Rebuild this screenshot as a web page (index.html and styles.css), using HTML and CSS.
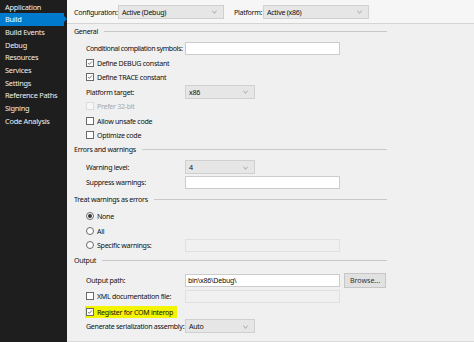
FILE: index.html
```html
<!DOCTYPE html>
<html lang="en">
<head>
    <meta charset="UTF-8">
    <title>Project Properties - Build</title>
    <link rel="stylesheet" href="styles.css">
</head>
<body>
    <div class="window">
        <nav class="sidebar">
            <div class="nav-item">Application</div>
            <div class="nav-item active">Build</div>
            <div class="nav-item">Build Events</div>
            <div class="nav-item">Debug</div>
            <div class="nav-item">Resources</div>
            <div class="nav-item">Services</div>
            <div class="nav-item">Settings</div>
            <div class="nav-item">Reference Paths</div>
            <div class="nav-item">Signing</div>
            <div class="nav-item">Code Analysis</div>
        </nav>

        <main class="main">
            <div class="topbar">
                <span class="top-label">Configuration:</span>
                <div class="select wide">Active (Debug)
                    <svg class="chev" viewBox="0 0 6 4"><polyline points="0.5,0.8 3,3.2 5.5,0.8"/></svg>
                </div>
                <span class="top-label platform">Platform:</span>
                <div class="select wide">Active (x86)
                    <svg class="chev" viewBox="0 0 6 4"><polyline points="0.5,0.8 3,3.2 5.5,0.8"/></svg>
                </div>
            </div>

            <div class="content">
                <!-- General -->
                <div class="section-head">General</div>
                <div class="group general">
                    <div class="row">
                        <span class="label tight">Conditional compilation symbols:</span>
                        <div class="textbox"></div>
                    </div>
                    <div class="row">
                        <span class="check checked"><svg viewBox="0 0 8 8"><polyline points="1.5,4.2 3.2,5.8 6.5,2"/></svg></span>
                        <span>Define DEBUG constant</span>
                    </div>
                    <div class="row">
                        <span class="check checked"><svg viewBox="0 0 8 8"><polyline points="1.5,4.2 3.2,5.8 6.5,2"/></svg></span>
                        <span>Define TRACE constant</span>
                    </div>
                    <div class="row">
                        <span class="label">Platform target:</span>
                        <div class="select">x86
                            <svg class="chev" viewBox="0 0 6 4"><polyline points="0.5,0.8 3,3.2 5.5,0.8"/></svg>
                        </div>
                    </div>
                    <div class="row disabled">
                        <span class="check"></span>
                        <span>Prefer 32-bit</span>
                    </div>
                    <div class="row">
                        <span class="check"></span>
                        <span>Allow unsafe code</span>
                    </div>
                    <div class="row">
                        <span class="check"></span>
                        <span>Optimize code</span>
                    </div>
                </div>

                <!-- Errors and warnings -->
                <div class="section-head">Errors and warnings</div>
                <div class="group errors">
                    <div class="row">
                        <span class="label">Warning level:</span>
                        <div class="select">4
                            <svg class="chev" viewBox="0 0 6 4"><polyline points="0.5,0.8 3,3.2 5.5,0.8"/></svg>
                        </div>
                    </div>
                    <div class="row">
                        <span class="label">Suppress warnings:</span>
                        <div class="textbox"></div>
                    </div>
                </div>

                <!-- Treat warnings as errors -->
                <div class="section-head">Treat warnings as errors</div>
                <div class="group treat">
                    <div class="row">
                        <span class="radio selected"></span>
                        <span>None</span>
                    </div>
                    <div class="row">
                        <span class="radio"></span>
                        <span>All</span>
                    </div>
                    <div class="row">
                        <span class="radio"></span>
                        <span class="label short">Specific warnings:</span>
                        <div class="textbox off"></div>
                    </div>
                </div>

                <!-- Output -->
                <div class="section-head">Output</div>
                <div class="group output">
                    <div class="row">
                        <span class="label">Output path:</span>
                        <div class="textbox">bin\x86\Debug\</div>
                        <button class="browse">Browse...</button>
                    </div>
                    <div class="row">
                        <span class="check"></span>
                        <span class="label short">XML documentation file:</span>
                        <div class="textbox off"></div>
                    </div>
                    <div class="row">
                        <span class="highlight">
                            <span class="check checked"><svg viewBox="0 0 8 8"><polyline points="1.5,4.2 3.2,5.8 6.5,2"/></svg></span>
                            <span>Register for COM interop</span>
                        </span>
                    </div>
                    <div class="row">
                        <span class="label">Generate serialization assembly:</span>
                        <div class="select">Auto
                            <svg class="chev" viewBox="0 0 6 4"><polyline points="0.5,0.8 3,3.2 5.5,0.8"/></svg>
                        </div>
                    </div>
                </div>
            </div>
        </main>
    </div>
</body>
</html>
```

FILE: styles.css
```css
:root {
    --sidebar-bg: #1e1e1e;
    --accent: #007acc;
    --panel-bg: #f0f0f0;
    --text-color: #111111;
    --muted: #a8a8a8;
    --border: #cccccc;
}

* {
    box-sizing: border-box;
}

body {
    margin: 0;
    font-family: 'Noto Sans', 'Open Sans', sans-serif;
    font-size: 7.1px;
    letter-spacing: -0.3px;
    color: var(--text-color);
    background: var(--panel-bg);
}

.window {
    display: flex;
    width: 474px;
    height: 342px;
    overflow: hidden;
}

/* left navigation */
.sidebar {
    width: 67px;
    flex-shrink: 0;
    background: var(--sidebar-bg);
    padding-top: 0.5px;
}

.nav-item {
    position: relative;
    height: 12.7px;
    line-height: 12.7px;
    padding-left: 5px;
    color: #f1f1f1;
    font-size: 7.4px;
    letter-spacing: -0.25px;
    white-space: nowrap;
}

.nav-item.active {
    background: var(--accent);
    color: #ffffff;
    margin-right: 3px;
}

.nav-item.active::after {
    content: "";
    position: absolute;
    right: -3px;
    top: 3.3px;
    border-top: 3px solid transparent;
    border-bottom: 3px solid transparent;
    border-left: 3px solid var(--accent);
}

/* right panel */
.main {
    flex: 1;
    background: var(--panel-bg);
    border-bottom: 1px solid #dadada;
}

.topbar {
    height: 24px;
    display: flex;
    align-items: center;
    padding-left: 7px;
    background: #f6f6f6;
    border-bottom: 1px solid #d4d4d4;
}

.top-label {
    width: 44px;
}

.top-label.platform {
    width: 29px;
    margin-left: 10px;
}

.content {
    padding-right: 87px;
}

.section-head {
    height: 14px;
    display: flex;
    align-items: center;
    gap: 6px;
    padding-left: 7px;
    white-space: nowrap;
}

.section-head::after {
    content: "";
    flex: 1;
    border-top: 1px solid #c9c9c9;
    margin-top: 1px;
}

.group {
    display: flex;
    flex-direction: column;
    padding-left: 19px;
}

.row {
    height: 14px;
    display: flex;
    align-items: center;
    white-space: nowrap;
}

.general {
    margin-top: 3px;
    gap: 0.5px;
}

.errors {
    margin-top: 4px;
    gap: 1px;
    margin-bottom: 3px;
}

.treat {
    margin-top: 3px;
    gap: 0.5px;
    margin-bottom: 1px;
}

.output {
    margin-top: 6px;
    gap: 2px;
}

.output .row:last-child {
    margin-top: -2px;
}

.label {
    width: 99px;
    flex-shrink: 0;
}

.label.tight {
    letter-spacing: -0.45px;
}

.label.short {
    width: 88px;
}

.disabled {
    color: var(--muted);
}

/* controls */
.check,
.radio {
    width: 8px;
    height: 8px;
    flex-shrink: 0;
    border: 1px solid #6a6a6a;
    background: #ffffff;
    margin-right: 3px;
    display: inline-flex;
}

.disabled .check {
    border-color: #dcdcdc;
    background: #f7f7f7;
}

.check svg {
    width: 100%;
    height: 100%;
    fill: none;
    stroke: #444444;
    stroke-width: 1;
}

.radio {
    border-radius: 50%;
    align-items: center;
    justify-content: center;
}

.radio.selected::after {
    content: "";
    width: 4px;
    height: 4px;
    border-radius: 50%;
    background: #333333;
}

.textbox {
    width: 155px;
    height: 13px;
    background: #ffffff;
    border: 1px solid var(--border);
    padding-left: 2px;
    line-height: 11px;
}

.textbox.off {
    background: var(--panel-bg);
    border-color: #e0e0e0;
}

.select {
    position: relative;
    width: 70px;
    height: 14px;
    background: #e6e6e6;
    border: 1px solid #d0d0d0;
    padding-left: 3px;
    line-height: 12px;
}

.select.wide {
    width: 106px;
}

.chev {
    position: absolute;
    right: 6px;
    top: 4.5px;
    width: 5px;
    height: 4px;
    fill: none;
    stroke: #8a8a8a;
    stroke-width: 1;
}

.browse {
    margin-left: 4px;
    width: 42px;
    height: 15px;
    padding: 0;
    font: inherit;
    color: #333333;
    background: #e1e1e1;
    border: 1px solid #c6c6c6;
}

.highlight {
    display: flex;
    align-items: center;
    background: #f3f500;
    height: 12px;
    padding: 0 4px 0 1px;
    margin-left: -1px;
}
```
